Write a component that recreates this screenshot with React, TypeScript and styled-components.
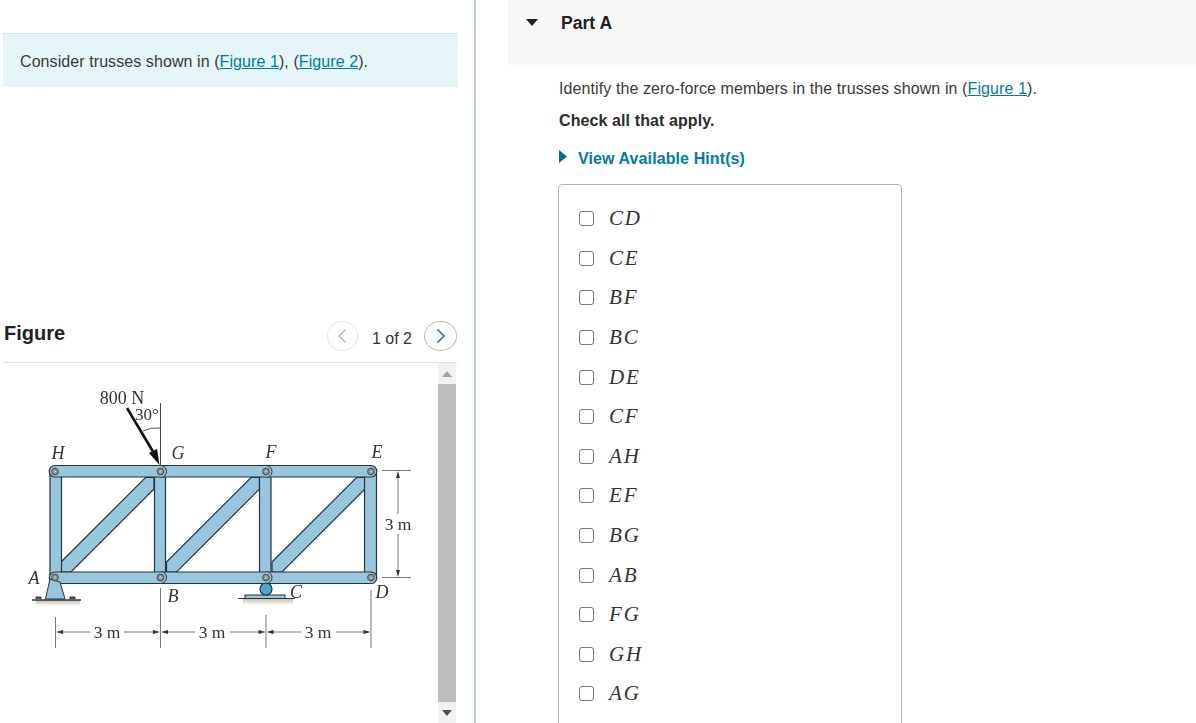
import React from "react";
import styled, { createGlobalStyle } from "styled-components";

const Global = createGlobalStyle`
  html, body { margin: 0; padding: 0; background: #fff; }
  body { font-family: "Liberation Sans", Arial, sans-serif; color: #2d2d2d; overflow: hidden; }
`;

const Page = styled.div`
  display: flex;
  width: 1196px;
  height: 723px;
  overflow: hidden;
`;

const LeftPane = styled.aside`
  box-sizing: border-box;
  width: 476px;
  height: 723px;
  padding: 33px 17px 0 3px;
  border-right: 2px solid #bed0e2;
  display: flex;
  flex-direction: column;
  flex: none;
`;

const Note = styled.div`
  box-sizing: border-box;
  height: 54px;
  margin-right: -1px;
  padding: 2px 17px 0;
  display: flex;
  align-items: center;
  background: #e6f5f7;
  border-top: 1px solid #dde4e8;
  font-size: 16px;
  letter-spacing: 0.08px;
  color: #3a3a3a;
  white-space: pre;
`;

const FigLink = styled.a`
  color: #007c9e;
  text-decoration: underline;
`;

const FigureHeader = styled.div`
  box-sizing: border-box;
  height: 43px;
  margin-top: 233px;
  display: flex;
  align-items: flex-start;
  border-bottom: 1px solid #dedede;
  flex: none;
`;

const FigureTitle = styled.h2`
  margin: 0 0 0 1px;
  font-size: 20px;
  line-height: 26px;
  font-weight: 700;
  color: #222;
  flex: 1;
`;

const Pager = styled.div`
  display: flex;
  align-items: center;
  height: 30px;
  padding-top: 1px;
  font-size: 16px;
  color: #333;
`;

const PageLabel = styled.span`
  margin: 5px 12px 0 14px;
`;

const RoundButton = styled.button<{ $off?: boolean }>`
  box-sizing: border-box;
  width: ${(p) => (p.$off ? "31px" : "33px")};
  height: 30px;
  padding: 0;
  border-radius: 50%;
  background: #fff;
  border: 1px solid ${(p) => (p.$off ? "#e4e4e4" : "#b9b9b9")};
  display: flex;
  align-items: center;
  justify-content: center;
`;

const FigureBody = styled.div`
  display: flex;
  flex: 1;
  min-height: 0;
`;

const FigureCanvas = styled.div`
  width: 434px;
  flex: none;
  overflow: hidden;
`;

const TrussSvg = styled.svg`
  display: block;
  filter: blur(0.35px);
`;

const Scrollbar = styled.div`
  width: 18px;
  flex: none;
  margin-left: 1px;
  display: flex;
  flex-direction: column;
  background: #f1f1f1;
`;

const ScrollArrow = styled.div`
  height: 21px;
  flex: none;
  display: flex;
  align-items: center;
  justify-content: center;
`;

const Thumb = styled.div`
  flex: 1;
  background: #bdbdbd;
`;

const RightPane = styled.main`
  flex: 1;
  padding-left: 32px;
  min-width: 0;
`;

const PartHeader = styled.header`
  box-sizing: border-box;
  height: 65px;
  padding: 13px 0 0 18px;
  display: flex;
  background: #f8f8f8;
`;

const PartTitle = styled.h3`
  margin: 0 0 0 23px;
  font-size: 17.6px;
  line-height: 20px;
  font-weight: 700;
  color: #222;
`;

const PartBody = styled.div`
  padding-left: 51px;
  font-size: 16px;
  letter-spacing: 0.1px;
  color: #3a3a3a;
`;

const Prompt = styled.p`
  margin: 15px 0 0;
  line-height: 18px;
  white-space: pre;
`;

const Strong = styled.p`
  margin: 12px 0 0;
  line-height: 22px;
  font-weight: 700;
  color: #2d2d2d;
`;

const Hint = styled.a`
  margin-top: 16px;
  height: 22px;
  display: flex;
  align-items: center;
  gap: 11px;
  color: #007c9e;
  font-weight: 700;
`;

const HintArrow = styled.svg`
  margin-top: -5px;
`;

const Choices = styled.div`
  box-sizing: border-box;
  width: 344px;
  height: 600px;
  margin: 14px 0 0 -1px;
  padding: 14px 0 0 20px;
  border: 1px solid #b4b4b4;
  border-radius: 4px;
`;

const Choice = styled.label`
  height: 39.6px;
  display: flex;
  align-items: center;
  gap: 15px;
`;

const Box = styled.span`
  box-sizing: border-box;
  width: 15px;
  height: 15px;
  border: 1.5px solid #767676;
  border-radius: 3px;
  background: #fff;
  flex: none;
`;

const MathLabel = styled.span`
  font-family: "Liberation Serif", "Times New Roman", serif;
  font-style: italic;
  font-size: 21px;
  letter-spacing: 1.8px;
  color: #333;
`;

const BLUE = "#97c6dd";
const EDGE = "#26343b";

const Member = ({ d }: { d: string }) => <path d={d} fill={BLUE} stroke={EDGE} strokeWidth={1.2} />;

const Pin = ({ x, y, arc }: { x: number; y: number; arc?: boolean }) => (
  <g>
    {arc && <path d={`M${x} ${y - 6}A6 6 0 0 1 ${x} ${y + 6}`} fill={BLUE} stroke={EDGE} strokeWidth={1} />}
    <circle cx={x} cy={y} r={3.4} fill="#858e90" stroke="#3c4548" strokeWidth={0.9} />
    <circle cx={x} cy={y} r={1.2} fill="#bcc3c5" />
  </g>
);

const Lab = ({ x, y, t, it = true, s = 18 }: { x: number; y: number; t: string; it?: boolean; s?: number }) => (
  <text x={x} y={y} fontFamily="Liberation Serif, serif" fontStyle={it ? "italic" : "normal"} fontSize={s} fill="#333" textAnchor="middle">
    {t}
  </text>
);

const Truss = () => {
  const diag = (x: number) =>
    `M${x + 6} 562 L${x + 90.5} 477.5 L${x + 99} 477.5 L${x + 99} 489 L${x + 16} 572 L${x + 6} 572 Z`;
  return (
    <TrussSvg width={434} height={360} viewBox="3 363 434 360">
      <defs>
        <linearGradient id="sh" x1="0" y1="0" x2="0" y2="1">
          <stop offset="0" stopColor="#bdb9a0" />
          <stop offset="1" stopColor="#fff" />
        </linearGradient>
      </defs>
      <g stroke="#777" strokeWidth={1} fill="none">
        <path d="M55.500 617V648M160.500 588V648M266 615V648M371 590V648" />
        <path d="M60 632H90M124 632H155M166 632H195M230 632H261M271 632H301M336 632H366" />
        <path d="M382 470.500H411M382 577.500H411M398 474V514M398 534V574" />
      </g>
      <path
        d="M56 632l7-2v4zM160 632l-7-2v4zM161 632l7-2v4zM265.500 632l-7-2v4zM266.500 632l7-2v4zM370.500 632l-7-2v4zM398 471l-2 7h4zM398 577l-2-7h4z"
        fill="#333"
      />
      <path d="M160.500 403V465" stroke="#444" strokeWidth={1} />
      <path d="M143 431Q151 427 160.500 428" stroke="#555" strokeWidth={1} fill="none" />
      <path d="M127 408L155 455" stroke="#111" strokeWidth={2.6} />
      <path d="M159.500 465L149 453L157 449Z" fill="#111" />
      <Lab x={122} y={404} t="800 N" it={false} />
      <Lab x={147} y={420} t="30°" it={false} s={17} />
      <Lab x={58} y={459} t="H" />
      <Lab x={178} y={459} t="G" />
      <Lab x={271} y={458} t="F" />
      <Lab x={377} y={458} t="E" />
      <Lab x={34} y={584} t="A" />
      <Lab x={173} y={602} t="B" />
      <Lab x={296} y={598} t="C" />
      <Lab x={382} y={598} t="D" />
      <Lab x={107} y={638} t="3 m" it={false} s={17.5} />
      <Lab x={212} y={638} t="3 m" it={false} s={17.5} />
      <Lab x={318} y={638} t="3 m" it={false} s={17.5} />
      <Lab x={398} y={530} t="3 m" it={false} s={17.5} />
      <Member d={diag(55)} />
      <Member d={diag(160.5)} />
      <Member d={diag(266)} />
      <Member d="M50 471V578H61.500V471Z" />
      <Member d="M154.500 471V578H165.500V471Z" />
      <Member d="M259.500 471V578H271V471Z" />
      <Member d="M364.500 471V578H376.500V471Z" />
      <Member d="M55 465.500H371A5.750 5.750 0 0 1 371 477H55A5.750 5.750 0 0 1 55 465.500Z" />
      <Member d="M55 572H371A5.750 5.750 0 0 1 371 583.500H55A5.750 5.750 0 0 1 55 572Z" />
      <rect x={36} y={600} width={44} height={6} fill="url(#sh)" />
      <rect x={243} y={598} width={50} height={7} fill="url(#sh)" />
      <path d="M32 600H81" stroke="#333" strokeWidth={1.5} />
      <path d="M36 599v-2h5v2M70 599v-2h5v2" fill="#556" stroke="#333" />
      <path d="M50 579L45.500 599H65L60 582Z" fill={BLUE} stroke={EDGE} />
      <path d="M238 598.500H295" stroke="#333" strokeWidth={1} />
      <rect x={245} y={595} width={40} height={3.500} fill={BLUE} stroke={EDGE} />
      <circle cx={266} cy={589} r={6} fill="#4aa6cc" stroke={EDGE} strokeWidth={1.200} />
      {[
        [55, 471.5, false],
        [160.5, 471.5, true],
        [266, 471.5, true],
        [371, 471.5, false],
        [55, 577.5, false],
        [160.5, 577.5, true],
        [266, 577.5, true],
        [371, 577.5, false],
      ].map(([x, y, arc]) => (
        <Pin key={`${x}-${y}`} x={x as number} y={y as number} arc={arc as boolean} />
      ))}
    </TrussSvg>
  );
};

const choices = ["CD", "CE", "BF", "BC", "DE", "CF", "AH", "EF", "BG", "AB", "FG", "GH", "AG"];

export default function App() {
  return (
    <Page>
      <Global />
      <LeftPane>
        <Note>
          Consider trusses shown in (<FigLink>Figure 1</FigLink>), (<FigLink>Figure 2</FigLink>).
        </Note>
        <FigureHeader>
          <FigureTitle>Figure</FigureTitle>
          <Pager>
            <RoundButton $off aria-label="previous">
              <svg width="10" height="14" viewBox="0 0 10 14">
                <path d="M8.500 .5L2 7l6.500 6.500" fill="none" stroke="#b6c2cc" strokeWidth="1.600" />
              </svg>
            </RoundButton>
            <PageLabel>1 of 2</PageLabel>
            <RoundButton aria-label="next">
              <svg width="10" height="14" viewBox="0 0 10 14">
                <path d="M1.500 .5L8 7l-6.500 6.500" fill="none" stroke="#3a6d96" strokeWidth="1.600" />
              </svg>
            </RoundButton>
          </Pager>
        </FigureHeader>
        <FigureBody>
          <FigureCanvas>
            <Truss />
          </FigureCanvas>
          <Scrollbar>
            <ScrollArrow>
              <svg width="10" height="6" viewBox="0 0 10 6">
                <path d="M5 0l5 6H0z" fill="#a3a3a3" />
              </svg>
            </ScrollArrow>
            <Thumb />
            <ScrollArrow>
              <svg width="10" height="6" viewBox="0 0 10 6">
                <path d="M0 0h10L5 6z" fill="#505050" />
              </svg>
            </ScrollArrow>
          </Scrollbar>
        </FigureBody>
      </LeftPane>
      <RightPane>
        <PartHeader>
          <svg width="12" height="7" viewBox="0 0 12 7" style={{ marginTop: 6 }}>
            <path d="M0 0h12L6 7z" fill="#222" />
          </svg>
          <PartTitle>Part A</PartTitle>
        </PartHeader>
        <PartBody>
          <Prompt>
            Identify the zero-force members in the trusses shown in (<FigLink>Figure 1</FigLink>).
          </Prompt>
          <Strong>Check all that apply.</Strong>
          <Hint>
            <HintArrow width="8" height="13" viewBox="0 0 8 13">
              <path d="M0 0l8 6.500L0 13z" fill="#006f8f" />
            </HintArrow>
            View Available Hint(s)
          </Hint>
          <Choices>
            {choices.map((c) => (
              <Choice key={c}>
                <Box />
                <MathLabel>{c}</MathLabel>
              </Choice>
            ))}
          </Choices>
        </PartBody>
      </RightPane>
    </Page>
  );
}
